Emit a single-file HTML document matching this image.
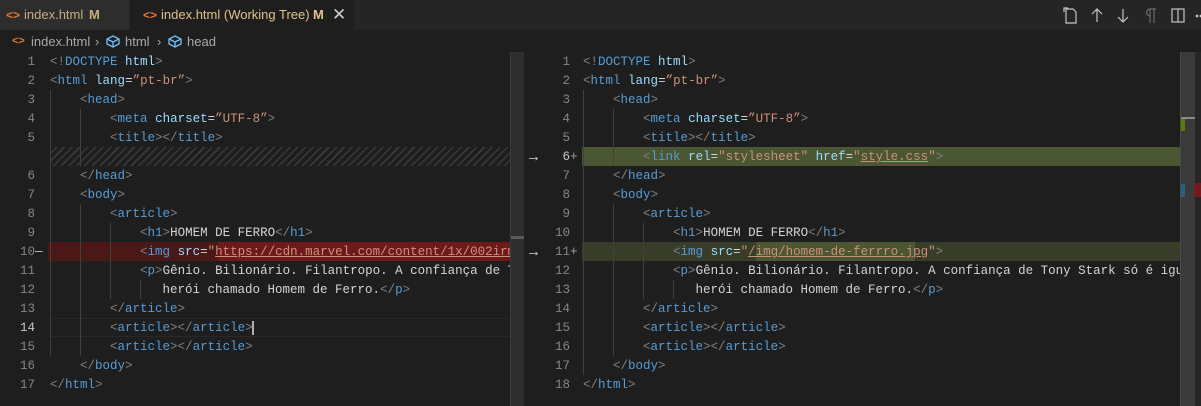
<!DOCTYPE html>
<html><head><meta charset="utf-8"><style>
*{margin:0;padding:0;box-sizing:border-box}
body{width:1201px;height:406px;background:#1e1e1e;overflow:hidden;position:relative;font-family:"Liberation Sans",sans-serif}
.abs{position:absolute}
.tabbar{left:0;top:0;width:1201px;height:30px;background:#252526}
.tab{top:0;height:30px;font-size:13px;line-height:30px;white-space:nowrap}
.code{font-family:"Liberation Mono",monospace;font-size:12.5px;line-height:19px;white-space:pre;color:#d4d4d4}
.row{position:absolute;height:19px;left:0}
.ln{position:absolute;width:30px;text-align:right;color:#858585;font-family:"Liberation Mono",monospace;font-size:12.5px;line-height:19px}
.b{color:#808080}.t{color:#569cd6}.a{color:#9cdcfe}.s{color:#ce9178}
.u{text-decoration:underline;text-decoration-color:#ce9178}
.g{position:absolute;width:1px;background:#404040}
</style></head><body>
<div class="abs tabbar"></div>
<div class="abs tab" style="left:0;width:129px;background:#2d2d2d;color:#c5a97a">
 <span style="position:absolute;left:6px;color:#e37933;font-size:12px;font-weight:bold">&lt;&gt;</span>
 <span style="position:absolute;left:24px;color:#c9ac7e">index.html</span>
 <span style="position:absolute;left:89px;color:#c9ac7e;font-weight:bold">M</span></div>
<div class="abs tab" style="left:130px;width:224px;background:#1e1e1e">
 <span style="position:absolute;left:13px;color:#e37933;font-size:12px;font-weight:bold">&lt;&gt;</span>
 <span style="position:absolute;left:31px;color:#e2c08d">index.html (Working Tree)</span>
 <span style="position:absolute;left:183px;color:#e2c08d;font-weight:bold">M</span>
 <span style="position:absolute;left:202px;color:#cccccc;font-size:17px">✕</span></div>
<svg class="abs" style="left:1060px;top:4px" width="141" height="22" viewBox="0 0 141 22" fill="none" stroke="#c5c5c5" stroke-width="1.2">
 <path d="M6 5h7l3 3v11H6z M4 8V4h4"/>
 <path d="M37 5v13 M32 10l5-5 5 5"/>
 <path d="M63 5v13 M58 13l5 5 5-5"/>
 <path d="M90 5v14 M94 5v14 M90 5h6 M90 5a3 3 0 0 0 0 7" stroke="#6a6a6a"/>
 <rect x="112" y="5" width="12" height="13"/><path d="M118 5v13"/>
 <circle cx="137" cy="12" r=".8" fill="#c5c5c5"/><circle cx="141" cy="12" r=".8" fill="#c5c5c5"/>
</svg>
<div class="abs" style="left:0;top:31px;height:21px;font-size:13px;line-height:21px;color:#a9a9a9;white-space:nowrap">
 <span style="position:absolute;left:12px;color:#e37933;font-size:11px;font-weight:bold">&lt;&gt;</span>
 <span style="position:absolute;left:31px">index.html</span>
 <span style="position:absolute;left:95px">›</span>
 <svg style="position:absolute;left:106px;top:4px" width="14" height="13" viewBox="0 0 14 13" fill="none" stroke="#75beff" stroke-width="1.3"><path d="M7 1l6 3v5l-6 3-6-3V4z M1 4l6 3 6-3 M7 7v5"/></svg>
 <span style="position:absolute;left:125px">html</span>
 <span style="position:absolute;left:157px">›</span>
 <svg style="position:absolute;left:168px;top:4px" width="14" height="13" viewBox="0 0 14 13" fill="none" stroke="#75beff" stroke-width="1.3"><path d="M7 1l6 3v5l-6 3-6-3V4z M1 4l6 3 6-3 M7 7v5"/></svg>
 <span style="position:absolute;left:187px">head</span>
</div>

<div class="abs" style="left:0;top:52px;width:524px;height:354px;overflow:hidden">
 <div class="row" style="top:95px;left:50px;width:474px;background:repeating-linear-gradient(135deg,transparent 0 4px,#3a3a3a 4px 5.5px)"></div>
 <div class="row" style="top:190px;left:48px;width:476px;background:#4b1818"></div>
 <div class="row" style="top:190px;left:218px;width:306px;background:#6f1a1a"></div>
 <div class="row" style="top:266px;left:50px;width:474px;border-top:1px solid #282828;border-bottom:1px solid #282828"></div>
 <div class="g" style="left:50px;top:38px;height:266px"></div>
 <div class="g" style="left:80px;top:57px;height:57px"></div>
 <div class="g" style="left:80px;top:152px;height:152px"></div>
 <div class="g" style="left:110px;top:171px;height:76px"></div>
 <div class="g" style="left:140px;top:228px;height:19px"></div>
 <div class="ln" style="left:5px;top:1px">1</div><div class="ln" style="left:5px;top:20px">2</div><div class="ln" style="left:5px;top:39px">3</div><div class="ln" style="left:5px;top:58px">4</div><div class="ln" style="left:5px;top:77px">5</div>
 <div class="ln" style="left:5px;top:115px">6</div><div class="ln" style="left:5px;top:134px">7</div><div class="ln" style="left:5px;top:153px">8</div><div class="ln" style="left:5px;top:172px">9</div><div class="ln" style="left:5px;top:191px">10</div><div class="ln" style="left:5px;top:210px">11</div><div class="ln" style="left:5px;top:229px">12</div><div class="ln" style="left:5px;top:248px">13</div><div class="ln" style="left:5px;top:267px;color:#c6c6c6">14</div><div class="ln" style="left:5px;top:286px">15</div><div class="ln" style="left:5px;top:305px">16</div><div class="ln" style="left:5px;top:324px">17</div>
 <div class="abs code" style="left:35px;top:191px;color:#c6c6c6">—</div>
 <div class="abs code" style="left:50px;top:1px"><span class="b">&lt;!</span><span class="t">DOCTYPE</span> <span class="a">html</span><span class="b">&gt;</span>
<span class="b">&lt;</span><span class="t">html</span> <span class="a">lang</span>=<span class="s">”pt-br”</span><span class="b">&gt;</span>
    <span class="b">&lt;</span><span class="t">head</span><span class="b">&gt;</span>
        <span class="b">&lt;</span><span class="t">meta</span> <span class="a">charset</span>=<span class="s">”UTF-8”</span><span class="b">&gt;</span>
        <span class="b">&lt;</span><span class="t">title</span><span class="b">&gt;&lt;/</span><span class="t">title</span><span class="b">&gt;</span>

    <span class="b">&lt;/</span><span class="t">head</span><span class="b">&gt;</span>
    <span class="b">&lt;</span><span class="t">body</span><span class="b">&gt;</span>
        <span class="b">&lt;</span><span class="t">article</span><span class="b">&gt;</span>
            <span class="b">&lt;</span><span class="t">h1</span><span class="b">&gt;</span>HOMEM DE FERRO<span class="b">&lt;/</span><span class="t">h1</span><span class="b">&gt;</span>
            <span class="b">&lt;</span><span class="t">img</span> <span class="a">src</span>=<span class="s">"<span class="u">https://cdn.marvel.com/content/1x/002irm.jpg</span>"</span>
            <span class="b">&lt;</span><span class="t">p</span><span class="b">&gt;</span>Gênio. Bilionário. Filantropo. A confiança de Tony Stark só é igual
               herói chamado Homem de Ferro.<span class="b">&lt;/</span><span class="t">p</span><span class="b">&gt;</span>
        <span class="b">&lt;/</span><span class="t">article</span><span class="b">&gt;</span>
        <span class="b">&lt;</span><span class="t">article</span><span class="b">&gt;&lt;/</span><span class="t">article</span><span class="b">&gt;</span><span style="border-left:2px solid #aeafad;margin-left:-1px"></span>
        <span class="b">&lt;</span><span class="t">article</span><span class="b">&gt;&lt;/</span><span class="t">article</span><span class="b">&gt;</span>
    <span class="b">&lt;/</span><span class="t">body</span><span class="b">&gt;</span>
<span class="b">&lt;/</span><span class="t">html</span><span class="b">&gt;</span></div>
 <div class="abs" style="left:510px;top:0;width:14px;height:354px;background:#2e2e2e;border-left:1px solid #3a3a3a"></div>
 <div class="abs" style="left:511px;top:184px;width:13px;height:3px;background:#5a5a5a"></div>
</div>
<div class="abs" style="left:526px;top:147px;color:#d4d4d4;font-size:15px;line-height:19px">→</div>
<div class="abs" style="left:526px;top:242px;color:#d4d4d4;font-size:15px;line-height:19px">→</div>

<div class="abs" style="left:545px;top:52px;width:656px;height:354px;overflow:hidden">
 <div class="row" style="top:95px;left:37px;width:612px;background:#4b5632"></div>
 <div class="row" style="top:190px;left:37px;width:612px;background:#373d29"></div>
 <div class="row" style="top:190px;left:211px;width:159px;background:#4b5632"></div>
 <div class="g" style="left:38px;top:38px;height:285px"></div>
 <div class="g" style="left:68px;top:57px;height:57px"></div>
 <div class="g" style="left:68px;top:152px;height:152px"></div>
 <div class="g" style="left:98px;top:171px;height:76px"></div>
 <div class="g" style="left:128px;top:228px;height:19px"></div>
 <div class="ln" style="left:-5px;top:1px">1</div><div class="ln" style="left:-5px;top:20px">2</div><div class="ln" style="left:-5px;top:39px">3</div><div class="ln" style="left:-5px;top:58px">4</div><div class="ln" style="left:-5px;top:77px">5</div><div class="ln" style="left:-5px;top:96px;color:#c6c6c6">6</div>
 <div class="ln" style="left:-5px;top:115px">7</div><div class="ln" style="left:-5px;top:134px">8</div><div class="ln" style="left:-5px;top:153px">9</div><div class="ln" style="left:-5px;top:172px">10</div><div class="ln" style="left:-5px;top:191px">11</div><div class="ln" style="left:-5px;top:210px">12</div><div class="ln" style="left:-5px;top:229px">13</div><div class="ln" style="left:-5px;top:248px">14</div><div class="ln" style="left:-5px;top:267px">15</div><div class="ln" style="left:-5px;top:286px">16</div><div class="ln" style="left:-5px;top:305px">17</div><div class="ln" style="left:-5px;top:324px">18</div>
 <div class="abs code" style="left:25px;top:96px;color:#a0a0a0">+</div>
 <div class="abs code" style="left:25px;top:191px;color:#a0a0a0">+</div>
 <div class="abs code" style="left:38px;top:1px"><span class="b">&lt;!</span><span class="t">DOCTYPE</span> <span class="a">html</span><span class="b">&gt;</span>
<span class="b">&lt;</span><span class="t">html</span> <span class="a">lang</span>=<span class="s">”pt-br”</span><span class="b">&gt;</span>
    <span class="b">&lt;</span><span class="t">head</span><span class="b">&gt;</span>
        <span class="b">&lt;</span><span class="t">meta</span> <span class="a">charset</span>=<span class="s">”UTF-8”</span><span class="b">&gt;</span>
        <span class="b">&lt;</span><span class="t">title</span><span class="b">&gt;&lt;/</span><span class="t">title</span><span class="b">&gt;</span>
        <span class="b">&lt;</span><span class="t">link</span> <span class="a">rel</span>=<span class="s">"stylesheet"</span> <span class="a">href</span>=<span class="s">"<span class="u">style.css</span>"</span><span class="b">&gt;</span>
    <span class="b">&lt;/</span><span class="t">head</span><span class="b">&gt;</span>
    <span class="b">&lt;</span><span class="t">body</span><span class="b">&gt;</span>
        <span class="b">&lt;</span><span class="t">article</span><span class="b">&gt;</span>
            <span class="b">&lt;</span><span class="t">h1</span><span class="b">&gt;</span>HOMEM DE FERRO<span class="b">&lt;/</span><span class="t">h1</span><span class="b">&gt;</span>
            <span class="b">&lt;</span><span class="t">img</span> <span class="a">src</span>=<span class="s">"<span class="u">/img/homem-de-ferrro.jpg</span>"</span><span class="b">&gt;</span>
            <span class="b">&lt;</span><span class="t">p</span><span class="b">&gt;</span>Gênio. Bilionário. Filantropo. A confiança de Tony Stark só é igual
               herói chamado Homem de Ferro.<span class="b">&lt;/</span><span class="t">p</span><span class="b">&gt;</span>
        <span class="b">&lt;/</span><span class="t">article</span><span class="b">&gt;</span>
        <span class="b">&lt;</span><span class="t">article</span><span class="b">&gt;&lt;/</span><span class="t">article</span><span class="b">&gt;</span>
        <span class="b">&lt;</span><span class="t">article</span><span class="b">&gt;&lt;/</span><span class="t">article</span><span class="b">&gt;</span>
    <span class="b">&lt;/</span><span class="t">body</span><span class="b">&gt;</span>
<span class="b">&lt;/</span><span class="t">html</span><span class="b">&gt;</span></div>
</div>
<div class="abs" style="left:1180px;top:52px;width:15px;height:354px;background:#3a3a3a;border-left:1px solid #4a4a4a"></div>
<div class="abs" style="left:1195px;top:52px;width:6px;height:354px;background:#262626"></div>
<div class="abs" style="left:1181px;top:117px;width:14px;height:2px;background:#8a8a8a"></div>
<div class="abs" style="left:1181px;top:119px;width:4px;height:12px;background:#587c0c"></div>
<div class="abs" style="left:1181px;top:184px;width:4px;height:13px;background:#1b81a8;opacity:.6"></div>
<div class="abs" style="left:1194px;top:183px;width:7px;height:14px;background:#94151b;opacity:.7"></div>
</body></html>
